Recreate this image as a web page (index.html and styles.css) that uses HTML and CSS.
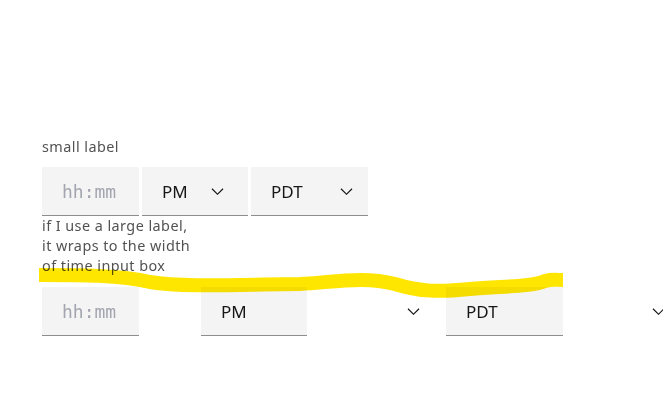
FILE: index.html
```html
<!DOCTYPE html>
<html lang="en">
<head>
    <meta charset="UTF-8">
    <meta name="viewport" content="width=device-width, initial-scale=1.0">
    <title>Time picker</title>
    <link rel="stylesheet" href="styles.css">
</head>
<body>
    <div class="page">
        <!-- Small label: selects sit next to the input -->
        <div class="time-picker">
            <div class="tp-input">
                <label for="time-1" class="tp-label">small label</label>
                <input type="text" id="time-1" class="tp-field" placeholder="hh:mm">
            </div>
            <div class="select-wrap select-wrap--ampm">
                <div class="select-box">PM</div>
                <svg class="chevron" viewBox="0 0 16 16"><path d="M8 11L3 6l.7-.7L8 9.6l4.3-4.3.7.7z"/></svg>
            </div>
            <div class="select-wrap select-wrap--zone">
                <div class="select-box select-box--zone">PDT</div>
                <svg class="chevron" viewBox="0 0 16 16"><path d="M8 11L3 6l.7-.7L8 9.6l4.3-4.3.7.7z"/></svg>
            </div>
        </div>

        <!-- Large label: wraps and pushes the selects apart -->
        <div class="time-picker time-picker--wide">
            <div class="tp-input tp-input--wide">
                <label for="time-2" class="tp-label tp-label--wrap">if I use a large label, it wraps to the width of time input box</label>
                <input type="text" id="time-2" class="tp-field" placeholder="hh:mm">
            </div>
            <div class="select-wrap select-wrap--stretch">
                <div class="select-box">PM</div>
                <svg class="chevron" viewBox="0 0 16 16"><path d="M8 11L3 6l.7-.7L8 9.6l4.3-4.3.7.7z"/></svg>
            </div>
            <div class="select-wrap select-wrap--stretch">
                <div class="select-box select-box--zone">PDT</div>
                <svg class="chevron" viewBox="0 0 16 16"><path d="M8 11L3 6l.7-.7L8 9.6l4.3-4.3.7.7z"/></svg>
            </div>
        </div>
    </div>

    <!-- highlighter scribble drawn over the screenshot -->
    <svg class="scribble" viewBox="0 0 663 399">
        <path d="M39 275 C80 275 120 275 150 282 C185 288 250 284 300 284 C335 282 365 276 395 284 C420 292 440 292 470 289 C505 286 530 287 545 281 C552 279 557 280 563 280"/>
    </svg>
</body>
</html>
```

FILE: styles.css
```css
body {
    margin: 0;
    font-family: "Noto Sans", Arial, sans-serif;
    background-color: #ffffff;
    color: #161616;
}

.page {
    padding: 137px 0 0 42px;
}

.time-picker {
    display: flex;
    align-items: flex-end;
    gap: 3px;
}

.tp-input {
    display: flex;
    flex-direction: column;
    flex-shrink: 0;
}

.tp-input--wide {
    width: 159px;
}

.tp-label {
    font-size: 14.4px;
    line-height: 20px;
    letter-spacing: 0.45px;
    color: #525252;
    margin-bottom: 10px;
}

.tp-label--wrap {
    width: 150px;
    margin-bottom: 11px;
}

.tp-field {
    box-sizing: border-box;
    width: 97px;
    height: 49px;
    padding: 0 0 0 20px;
    border: none;
    border-bottom: 1px solid #8d8d8d;
    background-color: #f4f4f4;
    font-family: "DejaVu Sans Mono", "Liberation Mono", monospace;
    font-size: 18px;
    color: #161616;
    outline: none;
}

.tp-field::placeholder {
    color: #a3a6b0;
}

.select-wrap {
    position: relative;
    display: flex;
    flex-shrink: 0;
}

.select-box {
    box-sizing: border-box;
    width: 106px;
    height: 49px;
    padding-left: 20px;
    display: flex;
    align-items: center;
    font-size: 17px;
    background-color: #f4f4f4;
    border-bottom: 1px solid #8d8d8d;
}

.select-box--zone {
    width: 117px;
}

.chevron {
    position: absolute;
    top: 15px;
    width: 19px;
    height: 19px;
    fill: #161616;
}

.select-wrap--ampm .chevron {
    right: 21px;
}

.select-wrap--zone .chevron {
    right: 12px;
}

.time-picker--wide {
    gap: 0;
}

.time-picker--wide .select-wrap--stretch {
    width: 229px;
}

.select-wrap--stretch + .select-wrap--stretch {
    margin-left: 16px;
}

.select-wrap--stretch .chevron {
    right: 7px;
}

.scribble {
    position: absolute;
    left: 0;
    top: 0;
    width: 663px;
    height: 399px;
    pointer-events: none;
    mix-blend-mode: multiply;
}

.scribble path {
    fill: none;
    stroke: #ffe600;
    stroke-width: 14;
}
```
